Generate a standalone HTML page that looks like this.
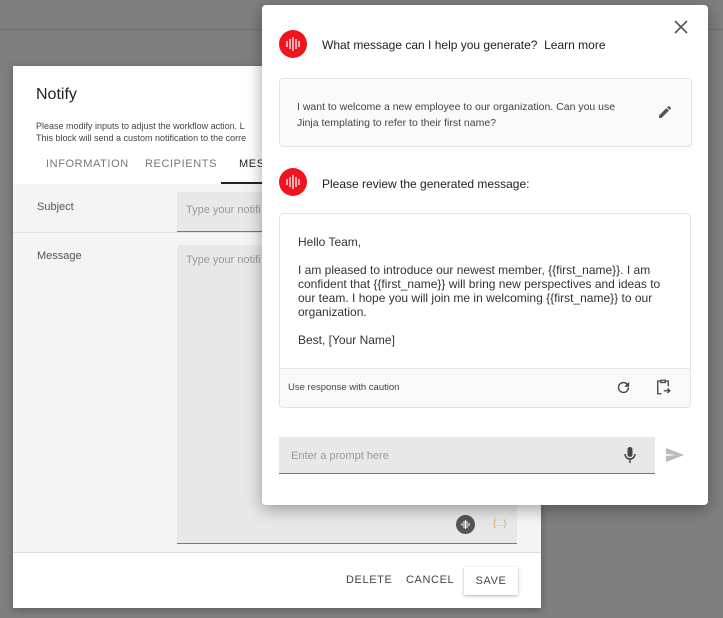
<!DOCTYPE html>
<html><head><style>
*{box-sizing:border-box;margin:0;padding:0}
body{width:723px;height:618px;background:#7f7f7f;font-family:"Liberation Sans",Arial,sans-serif;position:relative;overflow:hidden;color:#222}
.abs{position:absolute}
.line{left:0;top:29px;width:723px;height:1px;background:#6e6e6e}
#dlg{left:13px;top:66px;width:528px;height:542px;background:#fff;box-shadow:0 2px 8px rgba(0,0,0,.3)}
.tab{top:92px;font-size:11px;letter-spacing:.6px;color:#777}
#panel{left:262px;top:5px;width:446px;height:500px;background:#fff;border-radius:4px;box-shadow:0 4px 16px rgba(0,0,0,.35)}
.ico{width:28px;height:28px;border-radius:50%;background:#f0141e}
.box{border:1px solid #e3e3e3;border-radius:4px;background:#fafafa}
</style></head><body>
<div class="abs line"></div>
<div id="dlg" class="abs">
  <div class="abs" style="left:23px;top:20px;font-size:16px;color:#222">Notify</div>
  <div class="abs" style="left:23px;top:54px;font-size:9px;line-height:12px;color:#444;white-space:nowrap">Please modify inputs to adjust the workflow action. L<br>This block will send a custom notification to the corre</div>
  <div class="abs tab" style="left:33px">INFORMATION</div>
  <div class="abs tab" style="left:132px">RECIPIENTS</div>
  <div class="abs tab" style="left:226px;color:#222">MES</div>
  <div class="abs" style="left:208px;top:116px;width:60px;height:2px;background:#222"></div>
  <div class="abs" style="left:0;top:118px;width:528px;height:368px;background:#f4f4f4"></div>
  <div class="abs" style="left:24px;top:135px;font-size:11px;color:#555">Subject</div>
  <div class="abs" style="left:164px;top:126px;width:364px;height:40px;background:#e8e8e8;border-bottom:1px solid #777;font-size:11px;color:#999;padding:12px 9px">Type your notifi</div>
  <div class="abs" style="left:0;top:166px;width:528px;height:1px;background:#e2e2e2"></div>
  <div class="abs" style="left:24px;top:184px;font-size:11px;color:#555">Message</div>
  <div class="abs" style="left:164px;top:179px;width:340px;height:299px;background:#e8e8e8;border-bottom:1px solid #777;font-size:11px;color:#999;padding:9px 9px">Type your notifi</div>
  <div class="abs" style="left:443px;top:449px;width:19px;height:19px;border-radius:50%;background:#555"><svg width="19" height="19"><path d="M6 8v3M8 6v7M9.5 5v9M11 6v7M13 8v3" stroke="#fff" stroke-width="1"/></svg></div>
  <div class="abs" style="left:480px;top:452px;font-size:9px;color:#e0a050">{...}</div>
  <div class="abs" style="left:0;top:486px;width:528px;height:1px;background:#ddd"></div>
  <div class="abs" style="left:333px;top:508px;font-size:11px;letter-spacing:.6px;color:#444">DELETE</div>
  <div class="abs" style="left:393px;top:508px;font-size:11px;letter-spacing:.6px;color:#444">CANCEL</div>
  <div class="abs" style="left:451px;top:501px;width:54px;height:28px;background:#fff;box-shadow:0 1px 3px rgba(0,0,0,.3);font-size:11px;letter-spacing:.6px;color:#444;text-align:center;line-height:28px">SAVE</div>
</div>
<div id="panel" class="abs">
  <svg class="abs" style="left:412px;top:15px" width="14" height="14" viewBox="0 0 14 14"><path d="M1 1L13 13M13 1L1 13" stroke="#555" stroke-width="1.6"/></svg>
  <div class="abs ico" style="left:17px;top:25px"><svg width="28" height="28"><path d="M8 11v6M11 9v10M14 7v14M17 9v10M20 11v6" stroke="#fff" stroke-width="1.3"/></svg></div>
  <div class="abs" style="left:60px;top:33px;font-size:12px;color:#222">What message can I help you generate?&nbsp; Learn more</div>
  <div class="abs box" style="left:17px;top:73px;width:413px;height:69px"></div>
  <div class="abs" style="left:35px;top:94px;font-size:10.5px;line-height:16px;color:#444">I want to welcome a new employee to our organization. Can you use<br>Jinja templating to refer to their first name?</div>
  <svg class="abs" style="left:395px;top:99px" width="16" height="16" viewBox="0 0 24 24"><path fill="#555" d="M3 17.25V21h3.75L17.81 9.94l-3.75-3.75L3 17.25zM20.71 7.04a1 1 0 000-1.41l-2.34-2.34a1 1 0 00-1.41 0l-1.83 1.83 3.75 3.75 1.83-1.83z"/></svg>
  <div class="abs ico" style="left:17px;top:163px"><svg width="28" height="28"><path d="M8 11v6M11 9v10M14 7v14M17 9v10M20 11v6" stroke="#fff" stroke-width="1.3"/></svg></div>
  <div class="abs" style="left:60px;top:172px;font-size:12px;color:#222">Please review the generated message:</div>
  <div class="abs box" style="left:17px;top:208px;width:412px;height:195px;background:#fff;overflow:hidden">
    <div class="abs" style="left:18px;top:21px;width:378px;font-size:12px;line-height:14px;color:#333">Hello Team,<br><br>I am pleased to introduce our newest member, {{first_name}}. I am confident that {{first_name}} will bring new perspectives and ideas to our team. I hope you will join me in welcoming {{first_name}} to our organization.<br><br>Best, [Your Name]</div>
    <div class="abs" style="left:0;top:154px;width:412px;height:41px;background:#f9f9f9;border-top:1px solid #e6e6e6"></div>
    <div class="abs" style="left:8px;top:168px;font-size:9.5px;color:#444">Use response with caution</div>
    <svg class="abs" style="left:335px;top:165px" width="17" height="17" viewBox="0 0 24 24"><path fill="#444" d="M17.65 6.35A7.96 7.96 0 0012 4a8 8 0 108 8h-2.1a6 6 0 11-1.8-4.2L13 11h7V4l-2.35 2.35z"/></svg>
    <svg class="abs" style="left:374px;top:164px" width="18" height="18" viewBox="0 0 24 24"><path fill="none" stroke="#444" stroke-width="1.8" d="M9 4H5v17h5M15 4h4v7M9 3h6v3H9zM13 17h8M18 14l3 3-3 3"/></svg>
  </div>
  <div class="abs" style="left:17px;top:432px;width:376px;height:37px;background:#e8e8e8;border-bottom:1px solid #777;font-size:11px;color:#999;padding:13px 12px">Enter a prompt here</div>
  <svg class="abs" style="left:361px;top:441px" width="14" height="18" viewBox="0 0 14 18"><rect x="4.5" y="1" width="5" height="10" rx="2.5" fill="#444"/><path d="M2 8a5 5 0 0010 0M7 13v4" stroke="#444" stroke-width="1.5" fill="none"/></svg>
  <svg class="abs" style="left:404px;top:443px" width="18" height="14" viewBox="0 0 18 14"><path d="M0 0L18 7L0 14L0 8L11 7L0 6Z" fill="#bbb"/></svg>
</div>
</body></html>
